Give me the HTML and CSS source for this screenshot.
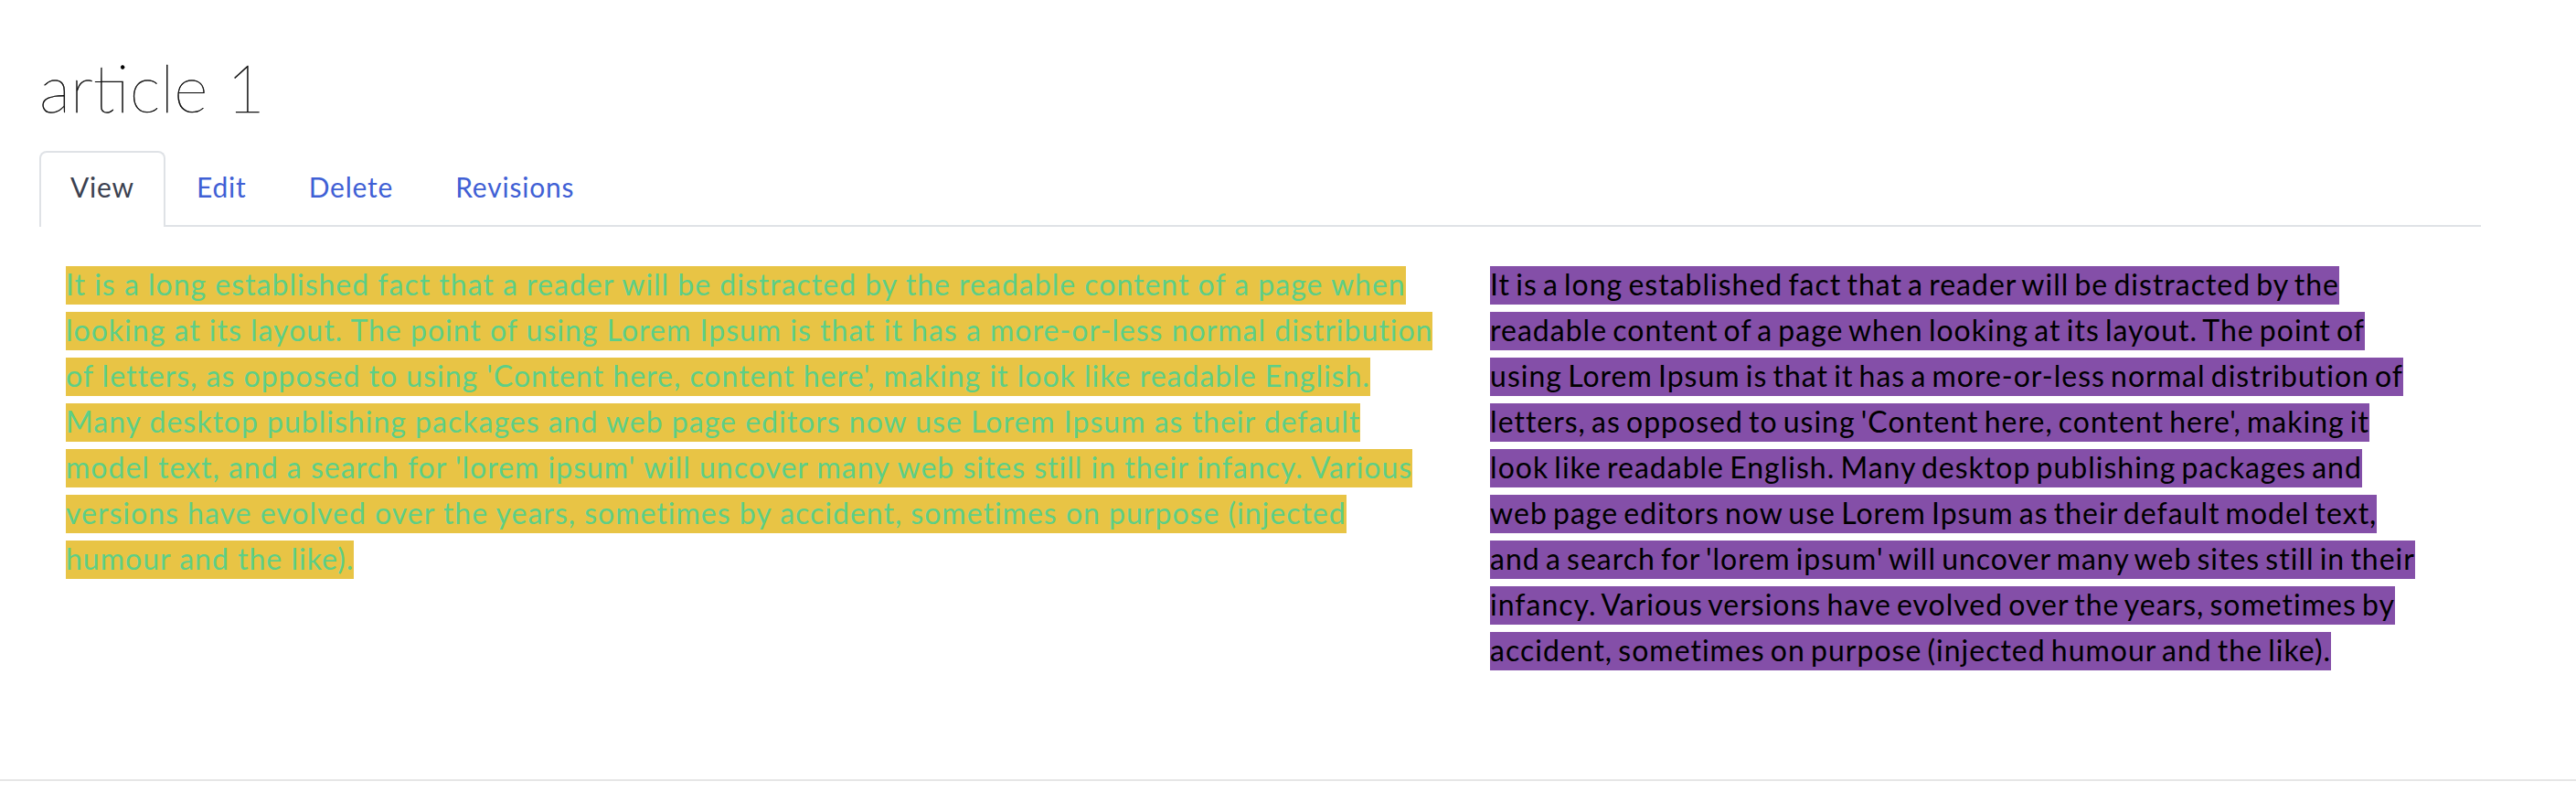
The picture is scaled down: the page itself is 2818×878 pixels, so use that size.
FILE: index.html
```html
<!DOCTYPE html>
<html lang="en">
<head>
<meta charset="utf-8">
<title>article 1</title>
<link rel="stylesheet" href="styles.css">
</head>
<body>
<div class="page">
  <h1 class="page-title">article 1</h1>
  <nav class="tabs">
    <ul class="tabs-list">
      <li class="tab is-active"><a href="#">View</a></li>
      <li class="tab"><a href="#">Edit</a></li>
      <li class="tab"><a href="#">Delete</a></li>
      <li class="tab"><a href="#">Revisions</a></li>
    </ul>
  </nav>
  <div class="content">
    <div class="col col-main">
      <p class="para"><span class="hl hl-yellow">It is a long established fact that a reader will be distracted by the readable content of a page when looking at its layout. The point of using Lorem Ipsum is that it has a more-or-less normal distribution of letters, as opposed to using 'Content here, content here', making it look like readable English. Many desktop publishing packages and web page editors now use Lorem Ipsum as their default model text, and a search for 'lorem ipsum' will uncover many web sites still in their infancy. Various versions have evolved over the years, sometimes by accident, sometimes on purpose (injected humour and the like).</span></p>
    </div>
    <div class="col col-side">
      <p class="para para-side"><span class="hl hl-purple">It is a long established fact that a reader will be distracted by the readable content of a page when looking at its layout. The point of using Lorem Ipsum is that it has a more-or-less normal distribution of letters, as opposed to using 'Content here, content here', making it look like readable English. Many desktop publishing packages and web page editors now use Lorem Ipsum as their default model text, and a search for 'lorem ipsum' will uncover many web sites still in their infancy. Various versions have evolved over the years, sometimes by accident, sometimes on purpose (injected humour and the like).</span></p>
    </div>
  </div>
</div>
<footer class="footer"></footer>
</body>
</html>
```
FILE: styles.css
```css
html, body {
  margin: 0;
  padding: 0;
  background: #ffffff;
}

body {
  font-family: Lato, "Noto Sans", sans-serif;
  color: #1a1a1a;
}

.page {
  padding: 0 104px 0 43px;
}

.page-title {
  margin: 52px 0 0 0;
  font-size: 72px;
  line-height: 86px;
  font-weight: 200;
  color: #000000;
  -webkit-text-stroke: 0.5px #000000;
  letter-spacing: 0;
}

.tabs {
  margin-top: 27px;
}

.tabs-list {
  list-style: none;
  margin: 0;
  padding: 0;
  display: flex;
  border-bottom: 2px solid #dfe2e6;
}

.tab {
  margin-bottom: -2px;
}

.tab a {
  display: block;
  padding: 19px 32px 24px 32px;
  font-size: 30px;
  line-height: 36px;
  letter-spacing: 0.8px;
  color: #3f60d5;
  text-decoration: none;
  border: 2px solid transparent;
  border-bottom: 0;
  border-radius: 8px 8px 0 0;
  margin-bottom: 2px;
}

.tab.is-active a {
  color: #3b4150;
  border-color: #dfe2e6;
  background: #ffffff;
  margin-bottom: 0;
  padding-bottom: 26px;
}

.content {
  display: grid;
  grid-template-columns: 7fr 5fr;
  margin-top: 38px;
  margin-bottom: 116px;
}

.col {
  padding: 0 29px;
}

.col-side {
  padding-right: 68px;
}

.para {
  margin: 0;
  font-size: 32px;
  line-height: 50px;
  letter-spacing: 1px;
}

.para-side {
  word-spacing: -3px;
}

.hl {
  padding: 0 0 3px 0;
}

.hl-yellow {
  background: #e8c445;
  color: #5ccf87;
}

.hl-purple {
  background: #844fa8;
  color: #000000;
}

.footer {
  border-top: 2px solid #e6e6e6;
  height: 24px;
}
```
